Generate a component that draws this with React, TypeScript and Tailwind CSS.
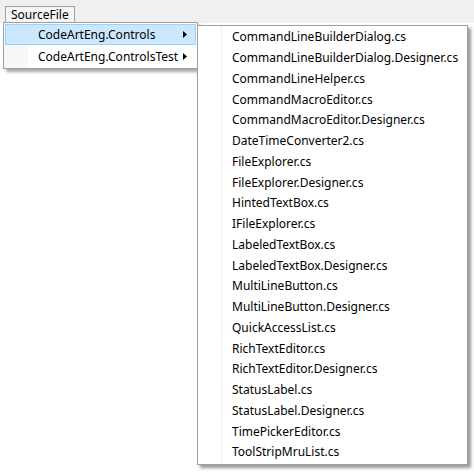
const files = [
  "CommandLineBuilderDialog.cs",
  "CommandLineBuilderDialog.Designer.cs",
  "CommandLineHelper.cs",
  "CommandMacroEditor.cs",
  "CommandMacroEditor.Designer.cs",
  "DateTimeConverter2.cs",
  "FileExplorer.cs",
  "FileExplorer.Designer.cs",
  "HintedTextBox.cs",
  "IFileExplorer.cs",
  "LabeledTextBox.cs",
  "LabeledTextBox.Designer.cs",
  "MultiLineButton.cs",
  "MultiLineButton.Designer.cs",
  "QuickAccessList.cs",
  "RichTextEditor.cs",
  "RichTextEditor.Designer.cs",
  "StatusLabel.cs",
  "StatusLabel.Designer.cs",
  "TimePickerEditor.cs",
  "ToolStripMruList.cs",
];

const projects = [
  { name: "CodeArtEng.Controls", active: true },
  { name: "CodeArtEng.ControlsTest", active: false },
];

function Arrow() {
  return (
    <svg width="4" height="7" viewBox="0 0 4 7" className="shrink-0">
      <path d="M0 0 L4 3.5 L0 7 Z" fill="#000" />
    </svg>
  );
}

export default function App() {
  return (
    <div
      className="relative w-[474px] h-[475px] bg-white overflow-hidden text-[12px] text-black"
      style={{ fontFamily: '"Noto Sans", "Open Sans", sans-serif' }}
    >
      {/* menu strip */}
      <div className="h-[23px] bg-[#f0f0f0] flex items-end pl-[5px]">
        <div className="h-[17px] px-[5px] border border-b-0 border-[#a0a0a0] bg-[#f5f5f5] flex items-center leading-none">
          SourceFile
        </div>
      </div>

      {/* dropdown */}
      <div className="absolute left-[3px] top-[22px] w-[195px] border border-[#a0a0a0] bg-white py-[1px] shadow-[3px_3px_3px_rgba(0,0,0,0.35)]">
        <div className="absolute left-0 top-0 bottom-0 w-[24px] bg-[#f8f8f8]" />
        {projects.map((p) => (
          <div
            key={p.name}
            className={
              p.active
                ? "relative h-[21px] mx-[1px] flex items-center border border-[#99d1ff] bg-[#cce8ff] mb-[1px]"
                : "relative h-[21px] mx-[1px] flex items-center border border-transparent"
            }
          >
            <span className="pl-[32px] flex-1">{p.name}</span>
            <span className="pr-[8px]">
              <Arrow />
            </span>
          </div>
        ))}
      </div>

      {/* submenu */}
      <div className="absolute left-[197px] top-[25px] w-[271px] border border-[#a0a0a0] bg-white py-[1px] shadow-[3px_3px_3px_rgba(0,0,0,0.4)]">
        <div className="absolute left-0 top-0 bottom-0 w-[24px] border-r border-[#f0f0f0]" />
        {files.map((f) => (
          <div key={f} className="relative h-[20.75px] flex items-center pl-[34px]">
            {f}
          </div>
        ))}
      </div>
    </div>
  );
}
